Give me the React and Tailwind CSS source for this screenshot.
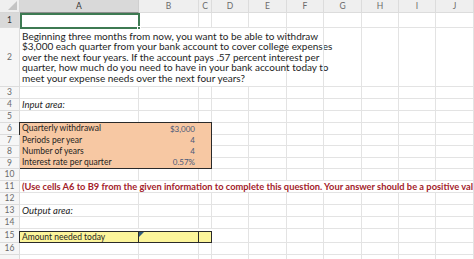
import React from 'react';

const grid = "border-r border-b border-[#e3e3e3]";
const letters = ["A", "B", "C", "D", "E", "F", "G", "H", "I", "J"];

const Blank = ({ count }) =>
  Array.from({ length: count }).map((_, i) => <div key={i} className={grid} />);

const RowHead = ({ n, active }) => (
  <div
    className={`flex items-center justify-center border-r border-b border-[#dcdcdc] text-[8.5px] leading-none ${
      active ? "bg-[#d9d9d9] text-[#333]" : "bg-[#f6f6f6] text-[#6b6b6b]"
    }`}
  >
    {n}
  </div>
);

const inputs = [
  ["Quarterly withdrawal", "$3,000"],
  ["Periods per year", "4"],
  ["Number of years", "4"],
  ["Interest rate per quarter", "0.57%"],
];

const question = [
  "Beginning three months from now, you want to be able to withdraw",
  "$3,000 each quarter from your bank account to cover college expenses",
  "over the next four years. If the account pays .57 percent interest per",
  "quarter, how much do you need to have in your bank account today to",
  "meet your expense needs over the next four years?",
];

const App = () => {
  return (
    <div className="w-[474px] h-[259px] overflow-hidden bg-white font-['Lato',sans-serif] text-[8.5px] leading-none text-[#1e1e1e]">
      <div className="grid grid-cols-[20px_119px_60px_13px_37px_38px_37px_38px_37px_37px_38px] grid-rows-[13px_15px_59px_12px_12px_12px_12px_11px_12px_11px_12px_12px_12px_12px_12px_14px_12px_12px]">
        {/* column headers */}
        <div className="relative bg-[#efefef] border-r border-b border-[#d6d6d6]">
          <svg className="absolute right-[2px] bottom-[2px]" width="9" height="9" viewBox="0 0 9 9">
            <polygon points="9,0 9,9 0,9" fill="#c4c4c4" />
          </svg>
        </div>
        {letters.map((l, i) => (
          <div
            key={l}
            className={`flex items-center justify-center border-r border-b text-[8.5px] ${
              i === 0
                ? "bg-[#d9d9d9] text-[#333] border-r-[#cfcfcf] border-b-[#8f8f8f]"
                : "bg-[#efefef] text-[#6b6b6b] border-[#dcdcdc]"
            }`}
          >
            {l}
          </div>
        ))}

        {/* row 1 */}
        <RowHead n={1} active />
        <div className="relative border-2 border-[#3d7a52] mr-[-1px] mb-[-1px]">
          <div className="absolute right-[-3px] bottom-[-3px] w-[4px] h-[4px] bg-[#3d7a52] border border-white" />
        </div>
        <Blank count={9} />

        {/* row 2 */}
        <RowHead n={2} />
        <div className={`col-span-5 flex flex-col justify-center px-[2px] text-[10px] leading-[10.5px] whitespace-nowrap ${grid}`}>
          {question.map((line) => (
            <span key={line}>{line}</span>
          ))}
        </div>
        <Blank count={5} />

        {/* row 3 */}
        <RowHead n={3} />
        <Blank count={10} />

        {/* row 4 */}
        <RowHead n={4} />
        <div className={`flex items-center px-[2px] italic text-[9.5px] whitespace-nowrap ${grid}`}>Input area:</div>
        <Blank count={9} />

        {/* row 5 */}
        <RowHead n={5} />
        <Blank count={10} />

        {/* rows 6-9 */}
        <RowHead n={6} />
        <div className="col-span-3 row-span-4 grid grid-rows-4 min-h-0 overflow-hidden bg-[#f7c8a3] border-[1.5px] border-[#2a2a2a] ml-[-1px] mt-[-1px]">
          {inputs.map(([label, value]) => (
            <div key={label} className="flex items-center justify-between min-h-0 pl-[2px] pr-[16px] whitespace-nowrap">
              <span>{label}</span>
              <span className="text-[8px] text-[#4a5878]">{value}</span>
            </div>
          ))}
        </div>
        <Blank count={7} />
        <RowHead n={7} />
        <Blank count={7} />
        <RowHead n={8} />
        <Blank count={7} />
        <RowHead n={9} />
        <Blank count={7} />

        {/* row 10 */}
        <RowHead n={10} />
        <Blank count={10} />

        {/* row 11 */}
        <RowHead n={11} />
        <div className={`col-span-10 flex items-center px-[2px] whitespace-nowrap overflow-hidden text-[9.3px] font-bold text-[#a3222a] ${grid}`}>
          (Use cells A6 to B9 from the given information to complete this question. Your answer should be a positive value.)
        </div>

        {/* row 12 */}
        <RowHead n={12} />
        <Blank count={10} />

        {/* row 13 */}
        <RowHead n={13} />
        <div className={`flex items-center px-[2px] italic text-[9.5px] whitespace-nowrap ${grid}`}>Output area:</div>
        <Blank count={9} />

        {/* row 14 */}
        <RowHead n={14} />
        <Blank count={10} />

        {/* row 15 */}
        <RowHead n={15} />
        <div className="col-span-3 mt-[2px] ml-[-1px] min-h-0 grid grid-cols-[119px_60px_1fr] bg-[#fcf59b] border-[1.5px] border-[#2a2a2a]">
          <div className="flex items-center pl-[2px] border-r-[1.5px] border-[#2a2a2a] whitespace-nowrap">Amount needed today</div>
          <div className="relative border-r-[1.5px] border-[#2a2a2a]">
            <svg className="absolute left-0 top-0" width="5" height="5" viewBox="0 0 5 5">
              <polygon points="0,0 5,0 0,5" fill="#2f5b7a" />
            </svg>
          </div>
          <div />
        </div>
        <Blank count={7} />

        {/* row 16 */}
        <RowHead n={16} />
        <Blank count={10} />

        {/* row 17, below the visible edge */}
        <RowHead n="" />
        <Blank count={10} />
      </div>
    </div>
  );
};

export default App;
